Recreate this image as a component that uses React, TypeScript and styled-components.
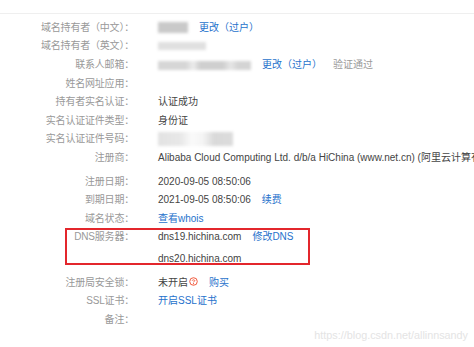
import React from "react";
import styled, { createGlobalStyle } from "styled-components";

const GlobalStyle = createGlobalStyle`
  html, body { margin: 0; padding: 0; background: #fff; }
  body {
    font-family: "Liberation Sans", "Noto Sans CJK SC", sans-serif;
    font-size: 10px;
    color: #444;
  }
`;

const Page = styled.div`
  position: relative;
  width: 474px;
  height: 347px;
  overflow: hidden;
  padding-top: 13px;
  box-sizing: border-box;
`;

const Divider = styled.div`
  height: 1px;
  background: #efefef;
  margin-bottom: 4.6px;
`;

const Row = styled.div<{ $mb?: number }>`
  display: flex;
  align-items: center;
  height: 18.6px;
  line-height: 14px;
  margin-bottom: ${(p) => p.$mb ?? 0}px;
`;

const Label = styled.div`
  width: 134px;
  flex-shrink: 0;
  text-align: right;
  color: #999;
  white-space: nowrap;
  letter-spacing: -0.2px;
`;

const Value = styled.div`
  margin-left: 24px;
  display: flex;
  align-items: center;
  gap: 11px;
  color: #444;
  white-space: nowrap;
`;

const Link = styled.a`
  color: #1f72cc;
  text-decoration: none;
  cursor: pointer;
`;

const Muted = styled.span`
  color: #9a9a9a;
`;

const Blur = styled.span<{ $w: number; $h: number; $bg: string }>`
  display: inline-block;
  width: ${(p) => p.$w}px;
  height: ${(p) => p.$h}px;
  background: ${(p) => p.$bg};
  filter: blur(1.5px);
`;

const DnsBox = styled.div`
  margin-left: 65px;
  width: 245px;
  box-sizing: border-box;
  border: 2px solid #e3262c;
  margin-bottom: 8.9px;

  & ${Label} {
    width: 67px;
  }
`;

const DnsLine = styled(Row)`
  height: 14px;
  &:last-child {
    margin-top: 7.5px;
    height: 11px;
    align-items: flex-start;
  }
`;

const Inline = styled.span`
  display: inline-flex;
  align-items: center;
  gap: 1px;
`;

const Watermark = styled.div`
  position: absolute;
  right: 6px;
  bottom: 6px;
  font-size: 10.8px;
  color: #e4e4e4;
`;

const QuestionIcon = () => (
  <svg width="9" height="9" viewBox="0 0 10 10" style={{ marginTop: -3 }}>
    <circle cx="5" cy="5" r="4.2" fill="none" stroke="#ef4a2a" strokeWidth="1" />
    <path
      d="M3.6 4 C3.6 2.9 6.4 2.9 6.4 4 C6.4 4.9 5 4.9 5 6"
      fill="none"
      stroke="#ef4a2a"
      strokeWidth="1"
    />
    <circle cx="5" cy="7.4" r="0.6" fill="#ef4a2a" />
  </svg>
);

export default function App() {
  return (
    <>
      <GlobalStyle />
      <Page>
        <Divider />
        <Row>
          <Label>域名持有者（中文）：</Label>
          <Value>
            <Blur $w={30} $h={11} $bg="#c9c9c9" />
            <Link>更改（过户）</Link>
          </Value>
        </Row>
        <Row>
          <Label>域名持有者（英文）：</Label>
          <Value>
            <Blur $w={48} $h={8} $bg="#e0e0e0" />
          </Value>
        </Row>
        <Row>
          <Label>联系人邮箱：</Label>
          <Value>
            <Blur
              $w={93}
              $h={9}
              $bg="linear-gradient(90deg,#d6d6d6 0%,#d6d6d6 30%,#ececec 38%,#cfcfcf 45%,#cfcfcf 70%,#e6e6e6 78%,#d4d4d4 86%)"
            />
            <Link>更改（过户）</Link>
            <Muted>验证通过</Muted>
          </Value>
        </Row>
        <Row>
          <Label>姓名网址应用：</Label>
          <Value />
        </Row>
        <Row>
          <Label>持有者实名认证：</Label>
          <Value>认证成功</Value>
        </Row>
        <Row>
          <Label>实名认证证件类型：</Label>
          <Value>身份证</Value>
        </Row>
        <Row>
          <Label>实名认证证件号码：</Label>
          <Value>
            <Blur
              $w={75}
              $h={14}
              $bg="linear-gradient(90deg,#e2e2e2 0%,#e8e8e8 30%,#fafafa 45%,#f4f4f4 60%,#d9d9d9 75%,#dcdcdc 100%)"
            />
          </Value>
        </Row>
        <Row $mb={5}>
          <Label>注册商：</Label>
          <Value>
            Alibaba Cloud Computing Ltd. d/b/a HiChina (www.net.cn) (阿里云计算有限公司（万网）)
          </Value>
        </Row>
        <Row>
          <Label>注册日期：</Label>
          <Value>2020-09-05 08:50:06</Value>
        </Row>
        <Row>
          <Label>到期日期：</Label>
          <Value>
            2021-09-05 08:50:06
            <Link>续费</Link>
          </Value>
        </Row>
        <Row>
          <Label>域名状态：</Label>
          <Value>
            <Link>查看whois</Link>
          </Value>
        </Row>
        <DnsBox>
          <DnsLine>
            <Label>DNS服务器：</Label>
            <Value>
              dns19.hichina.com
              <Link>修改DNS</Link>
            </Value>
          </DnsLine>
          <DnsLine>
            <Label />
            <Value>dns20.hichina.com</Value>
          </DnsLine>
        </DnsBox>
        <Row>
          <Label>注册局安全锁：</Label>
          <Value>
            <Inline>
              未开启
              <QuestionIcon />
            </Inline>
            <Link>购买</Link>
          </Value>
        </Row>
        <Row>
          <Label>SSL证书：</Label>
          <Value>
            <Link>开启SSL证书</Link>
          </Value>
        </Row>
        <Row>
          <Label>备注：</Label>
          <Value />
        </Row>
        <Watermark>https://blog.csdn.net/allinnsandy</Watermark>
      </Page>
    </>
  );
}
